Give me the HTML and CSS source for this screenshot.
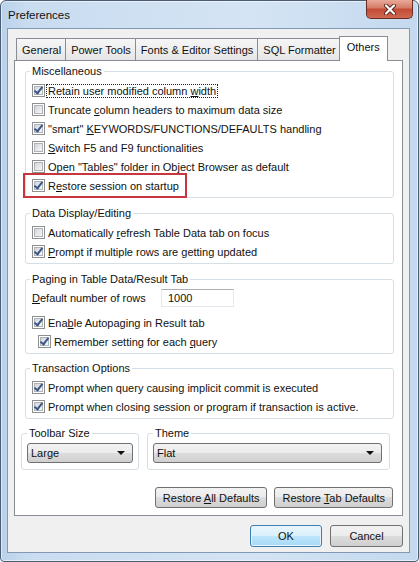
FILE: index.html
```html
<!DOCTYPE html>
<html lang="en">
<head>
    <meta charset="UTF-8">
    <title>Preferences</title>
    <link rel="stylesheet" href="styles.css">
</head>
<body>
    <div class="window">
        <div class="titlebar">
            <span class="title">Preferences</span>
            <span class="close">
                <svg width="14" height="11" viewBox="0 0 14 11">
                    <path d="M3 1.5 L11 9.5 M11 1.5 L3 9.5" stroke="#5b231b" stroke-width="4" stroke-linecap="round"/>
                    <path d="M3 1.5 L11 9.5 M11 1.5 L3 9.5" stroke="#fff" stroke-width="2.2" stroke-linecap="round"/>
                </svg>
            </span>
        </div>

        <div class="client">
            <div class="tabs">
                <span class="tab">General</span>
                <span class="tab">Power Tools</span>
                <span class="tab">Fonts &amp; Editor Settings</span>
                <span class="tab">SQL Formatter</span>
                <span class="tab active">Others</span>
            </div>

            <div class="panel">
                <fieldset class="group">
                    <legend>Miscellaneous</legend>
                    <div class="check"><span class="box on"></span><span class="focus">Retain user modified column <u>w</u>idth</span></div>
                    <div class="check"><span class="box"></span><span>Truncate <u>c</u>olumn headers to maximum data size</span></div>
                    <div class="check"><span class="box on"></span><span>"smart" <u>K</u>EYWORDS/FUNCTIONS/DEFAULTS handling</span></div>
                    <div class="check"><span class="box"></span><span><u>S</u>witch F5 and F9 functionalities</span></div>
                    <div class="check"><span class="box"></span><span>Open "Tables" folder in Object Browser as default</span></div>
                    <div class="check marked"><span class="box on"></span><span>R<u>e</u>store session on startup</span></div>
                </fieldset>

                <fieldset class="group">
                    <legend>Data Display/Editing</legend>
                    <div class="check"><span class="box"></span><span>Automatically <u>r</u>efresh Table Data tab on focus</span></div>
                    <div class="check"><span class="box on"></span><span><u>P</u>rompt if multiple rows are getting updated</span></div>
                </fieldset>

                <fieldset class="group">
                    <legend>Paging in Table Data/Result Tab</legend>
                    <div class="field">
                        <span class="field-label"><u>D</u>efault number of rows</span>
                        <span class="input">1000</span>
                    </div>
                    <div class="check spaced"><span class="box on"></span><span>Ena<u>b</u>le Autopaging in Result tab</span></div>
                    <div class="check indent"><span class="box on"></span><span>Remember setting for each <u>q</u>uery</span></div>
                </fieldset>

                <fieldset class="group tight">
                    <legend>Transaction Options</legend>
                    <div class="check"><span class="box on"></span><span>Prompt when query causing implicit commit is executed</span></div>
                    <div class="check"><span class="box on"></span><span>Prompt when closing session or program if transaction is active.</span></div>
                </fieldset>

                <div class="pickers">
                    <fieldset class="picker toolbar-size">
                        <legend>Toolbar Size</legend>
                        <div class="combo">Large<span class="arrow"></span></div>
                    </fieldset>
                    <fieldset class="picker theme">
                        <legend>Theme</legend>
                        <div class="combo">Flat<span class="arrow"></span></div>
                    </fieldset>
                </div>

                <div class="panel-actions">
                    <button class="btn">Restore <u>A</u>ll Defaults</button>
                    <button class="btn">Restore <u>T</u>ab Defaults</button>
                </div>
            </div>

            <div class="dialog-actions">
                <button class="btn default">OK</button>
                <button class="btn cancel">Cancel</button>
            </div>
        </div>
    </div>
</body>
</html>
```

FILE: styles.css
```css
body {
    margin: 0;
    font-family: "Liberation Sans", Arial, sans-serif;
    font-size: 11px;
    color: #111;
}

.window {
    width: 419px;
    height: 562px;
    box-sizing: border-box;
    display: flex;
    flex-direction: column;
    background: linear-gradient(to right, #b9d1ea, #c9dcf0 6%, #d4e4f4 60%, #c4d9ee);
    border: 1px solid #4a5d74;
    border-radius: 6px 6px 4px 4px;
    box-shadow: inset 0 0 0 1px rgba(255, 255, 255, 0.55);
}

.titlebar {
    height: 27px;
    display: flex;
    justify-content: space-between;
    align-items: flex-start;
}

.title {
    padding: 7px 0 0 7px;
    line-height: 15px;
    font-size: 11.5px;
}

.close {
    width: 47px;
    height: 19px;
    box-sizing: border-box;
    margin: -1px 5px 0 0;
    display: flex;
    justify-content: center;
    align-items: center;
    border: 1px solid #6b2c24;
    border-top: none;
    border-radius: 0 0 5px 5px;
    background: linear-gradient(#e9a99a, #d47a66 45%, #c44a34 50%, #cf6a52);
}

.client {
    flex: 1;
    margin: 0 8px 8px 6px;
    padding: 7px 6px 0 6px;
    background-color: #f0f0f0;
    border: 1px solid #8199b3;
    display: flex;
    flex-direction: column;
}

.tabs {
    height: 24px;
    margin-left: 2px;
    display: flex;
    align-items: flex-end;
}

.tab {
    height: 22px;
    box-sizing: border-box;
    padding: 0 4px 0 5px;
    display: flex;
    align-items: center;
    border: 1px solid #898c95;
    border-bottom: none;
    background: linear-gradient(#f6f6f6, #e6e6e6);
    white-space: nowrap;
}

.tab + .tab {
    margin-left: -1px;
}

.tab.active {
    height: 25px;
    margin: 0 0 -1px -2px;
    padding: 0 7px 4px;
    background: #fff;
    position: relative;
    z-index: 1;
}

.panel {
    background-color: #fff;
    border: 1px solid #898c95;
    padding: 2px 8px 7px 10px;
}

.group, .picker {
    margin: 7px 0 0 0;
    padding: 2px 6px 2px 6px;
    border: 1px solid #d5dfe5;
    border-radius: 3px;
    min-width: 0;
}

.group:first-child {
    margin-top: 0;
}

.group.tight {
    margin-top: 6px;
}

legend {
    padding: 0 2px;
    margin-left: -2px;
    line-height: 16px;
}

.check {
    height: 19px;
    display: flex;
    align-items: center;
    white-space: nowrap;
}

.check.spaced {
    margin-top: 6px;
}

.check.indent {
    padding-left: 6px;
}

.box {
    width: 13px;
    height: 13px;
    box-sizing: border-box;
    margin-right: 3px;
    flex-shrink: 0;
    position: relative;
    border: 1px solid #8e8f8f;
    background: #fff;
}

.box::before {
    content: "";
    position: absolute;
    left: 1px;
    top: 1px;
    right: 1px;
    bottom: 1px;
    border: 1px solid #b0b4ba;
    background: linear-gradient(135deg, #d2d5da, #f7f7f7);
}

.box.on::after {
    content: "";
    position: absolute;
    left: 3px;
    top: 0;
    width: 3px;
    height: 7px;
    border: solid #3a5688;
    border-width: 0 2px 2px 0;
    transform: rotate(38deg);
}

.focus {
    outline: 1px dotted #222;
    outline-offset: 0;
    padding: 0 1px;
    margin-left: -1px;
}

.check.marked {
    position: relative;
}

.check.marked::after {
    content: "";
    position: absolute;
    left: -9px;
    top: -3px;
    width: 164px;
    height: 25px;
    box-sizing: border-box;
    border: 2px solid #c9353c;
}

.field {
    height: 18px;
    display: flex;
    align-items: center;
}

.field-label {
    width: 129px;
}

.input {
    width: 73px;
    height: 18px;
    box-sizing: border-box;
    padding-left: 6px;
    display: flex;
    align-items: center;
    border: 1px solid #e3e9ef;
    border-top-color: #abadb3;
}

.pickers {
    margin: 6px 0 0 -4px;
    display: flex;
    gap: 8px;
}

.picker {
    margin: 0;
    padding: 2px 5px 6px 5px;
}

.picker legend {
    margin-left: 0;
}

.toolbar-size {
    width: 118px;
    box-sizing: border-box;
}

.theme {
    width: 243px;
    box-sizing: border-box;
    padding-right: 7px;
}

.combo {
    height: 20px;
    box-sizing: border-box;
    padding: 0 7px 0 3px;
    display: flex;
    justify-content: space-between;
    align-items: center;
    border: 1px solid #707070;
    border-radius: 3px;
    background: linear-gradient(#f2f2f2, #ebebeb 50%, #dddddd 50%, #cfcfcf);
}

.arrow {
    width: 0;
    height: 0;
    border-left: 4px solid transparent;
    border-right: 4px solid transparent;
    border-top: 4px solid #111;
}

.panel-actions {
    margin: 17px 1px 0 0;
    display: flex;
    justify-content: flex-end;
    gap: 7px;
}

.btn {
    height: 21px;
    padding: 0 7px;
    font-family: inherit;
    font-size: 11px;
    color: #111;
    border: 1px solid #707070;
    border-radius: 3px;
    background: linear-gradient(#f2f2f2, #ebebeb 50%, #dddddd 50%, #cfcfcf);
    white-space: nowrap;
}

.dialog-actions {
    margin-top: 9px;
    display: flex;
    justify-content: flex-end;
    gap: 8px;
}

.dialog-actions .btn {
    height: 22px;
}

.btn.default {
    width: 72px;
    border-color: #3c7fb1;
    background: linear-gradient(#eaf6fd, #d9f0fc 50%, #bee6fd 50%, #a7d9f5);
    box-shadow: inset 0 0 0 1px #e8f4fb;
}

.btn.cancel {
    width: 73px;
}
```
